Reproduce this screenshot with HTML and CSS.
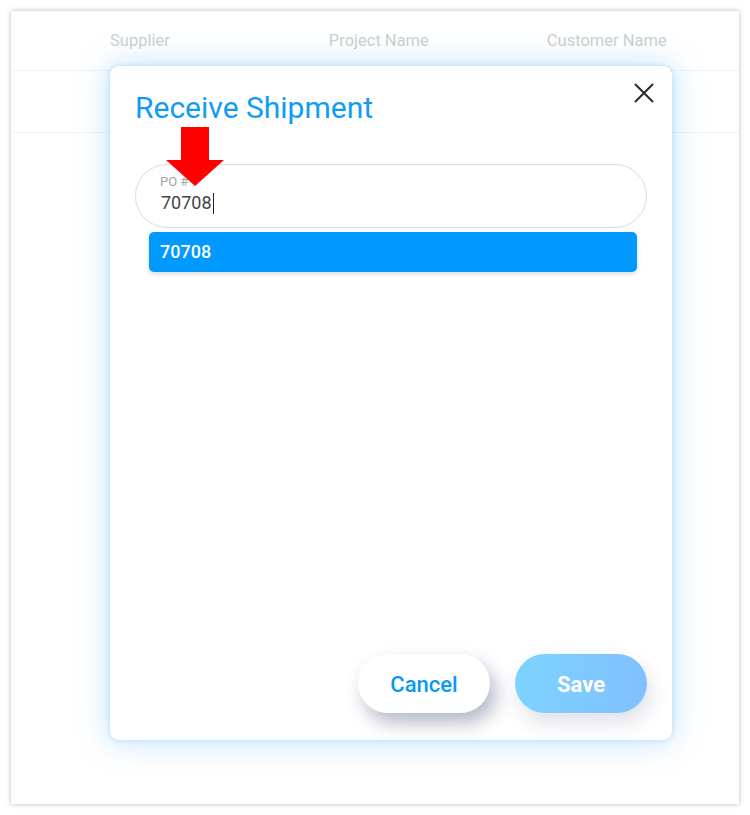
FILE: index.html
```html
<!DOCTYPE html>
<html lang="en">
<head>
<meta charset="utf-8">
<title>Receive Shipment</title>
<link rel="stylesheet" href="styles.css">
</head>
<body>
<div class="frame">
  <div class="thead">
    <span class="th th-supplier">Supplier</span>
    <span class="th th-project">Project Name</span>
    <span class="th th-customer">Customer Name</span>
  </div>
  <div class="trow"></div>

  <div class="modal">
    <div class="modal-head">
      <h1 class="title">Receive Shipment</h1>
      <button class="close" aria-label="Close">
        <svg width="20" height="20" viewBox="0 0 20 20"><path d="M1 1L19 19M19 1L1 19" stroke="#2b2b2b" stroke-width="2" fill="none"/></svg>
      </button>
    </div>
    <div class="field">
      <span class="label">PO #</span>
      <span class="value">70708<span class="caret"></span></span>
    </div>
    <ul class="options">
      <li class="option">70708</li>
    </ul>
    <div class="actions">
      <button class="btn btn-cancel">Cancel</button>
      <button class="btn btn-save">Save</button>
    </div>
  </div>

  <svg class="arrow" width="58" height="60" viewBox="0 0 58 60"><path d="M15 0H43V33H58L29 59L0 33H15Z" fill="#ff0000"/></svg>
</div>
</body>
</html>
```
FILE: styles.css
```css
* { box-sizing: border-box; }
html, body { margin: 0; padding: 0; background: #ffffff; }
body { font-family: Roboto, "Liberation Sans", sans-serif; }

.frame {
  position: relative;
  margin: 11px;
  width: 728px;
  height: 793px;
  background: #ffffff;
  box-shadow: 0 0 5px rgba(0,0,0,0.28);
}

.thead {
  height: 60px;
  display: flex;
  align-items: center;
  border-bottom: 1px solid #f3f3f3;
  font-size: 16.5px;
  color: #cfcfcf;
}
.th-supplier { margin-left: 99px; }
.th-project { margin-left: 159px; }
.th-customer { margin-left: 118px; }

.trow {
  height: 62px;
  border-bottom: 1px solid #f3f3f3;
}

.modal {
  position: absolute;
  left: 99px;
  top: 55px;
  width: 562px;
  height: 674px;
  background: #ffffff;
  border-radius: 9px;
  box-shadow: 0 0 5px rgba(110,190,255,0.45), 0 0 32px rgba(60,165,255,0.35);
  padding: 25px 25px 27px 25px;
  display: flex;
  flex-direction: column;
}

.modal-head {
  display: flex;
  justify-content: space-between;
  align-items: flex-start;
}
.title {
  margin: 0;
  font-size: 30px;
  line-height: 34px;
  font-weight: 400;
  color: #109cf5;
}
.close {
  margin: -8px -7px 0 0;
  padding: 0;
  border: 0;
  background: none;
  width: 20px;
  height: 20px;
  display: flex;
}

.field {
  margin-top: 39px;
  height: 64px;
  border: 1px solid #dcdcdc;
  border-radius: 32px;
  padding: 9px 24px 0 24px;
  display: flex;
  flex-direction: column;
}
.label {
  font-size: 13px;
  line-height: 15px;
  color: #a3a3a3;
}
.value {
  margin-top: 2px;
  margin-left: 1px;
  font-size: 18px;
  line-height: 24px;
  color: #444444;
  display: flex;
  align-items: center;
}
.caret {
  display: inline-block;
  width: 1.5px;
  height: 21px;
  background: #222;
  margin-left: 1px;
}

.options {
  list-style: none;
  margin: 4px 10px 0 14px;
  padding: 0;
}
.option {
  height: 40px;
  background: #0099ff;
  border-radius: 5px;
  color: #ffffff;
  font-size: 18px;
  font-weight: 500;
  line-height: 40px;
  padding-left: 11px;
  box-shadow: 0 2px 5px rgba(0,0,0,0.15);
}

.actions {
  margin-top: auto;
  display: flex;
  justify-content: flex-end;
  gap: 25px;
}
.btn {
  width: 132px;
  height: 59px;
  border: 0;
  border-radius: 30px;
  font-family: Roboto, "Liberation Sans", sans-serif;
  font-size: 22px;
  font-weight: 500;
  padding-top: 2px;
  cursor: pointer;
}
.btn-cancel {
  background: #ffffff;
  color: #0a99f2;
  box-shadow: 6px 10px 18px rgba(40,50,100,0.34);
}
.btn-save {
  background: linear-gradient(90deg, #7cd3ff 0%, #80c0ff 100%);
  color: #ffffff;
  font-weight: 700;
  box-shadow: 4px 10px 20px rgba(60,70,120,0.16);
}

.arrow {
  position: absolute;
  left: 155px;
  top: 116px;
}
```
